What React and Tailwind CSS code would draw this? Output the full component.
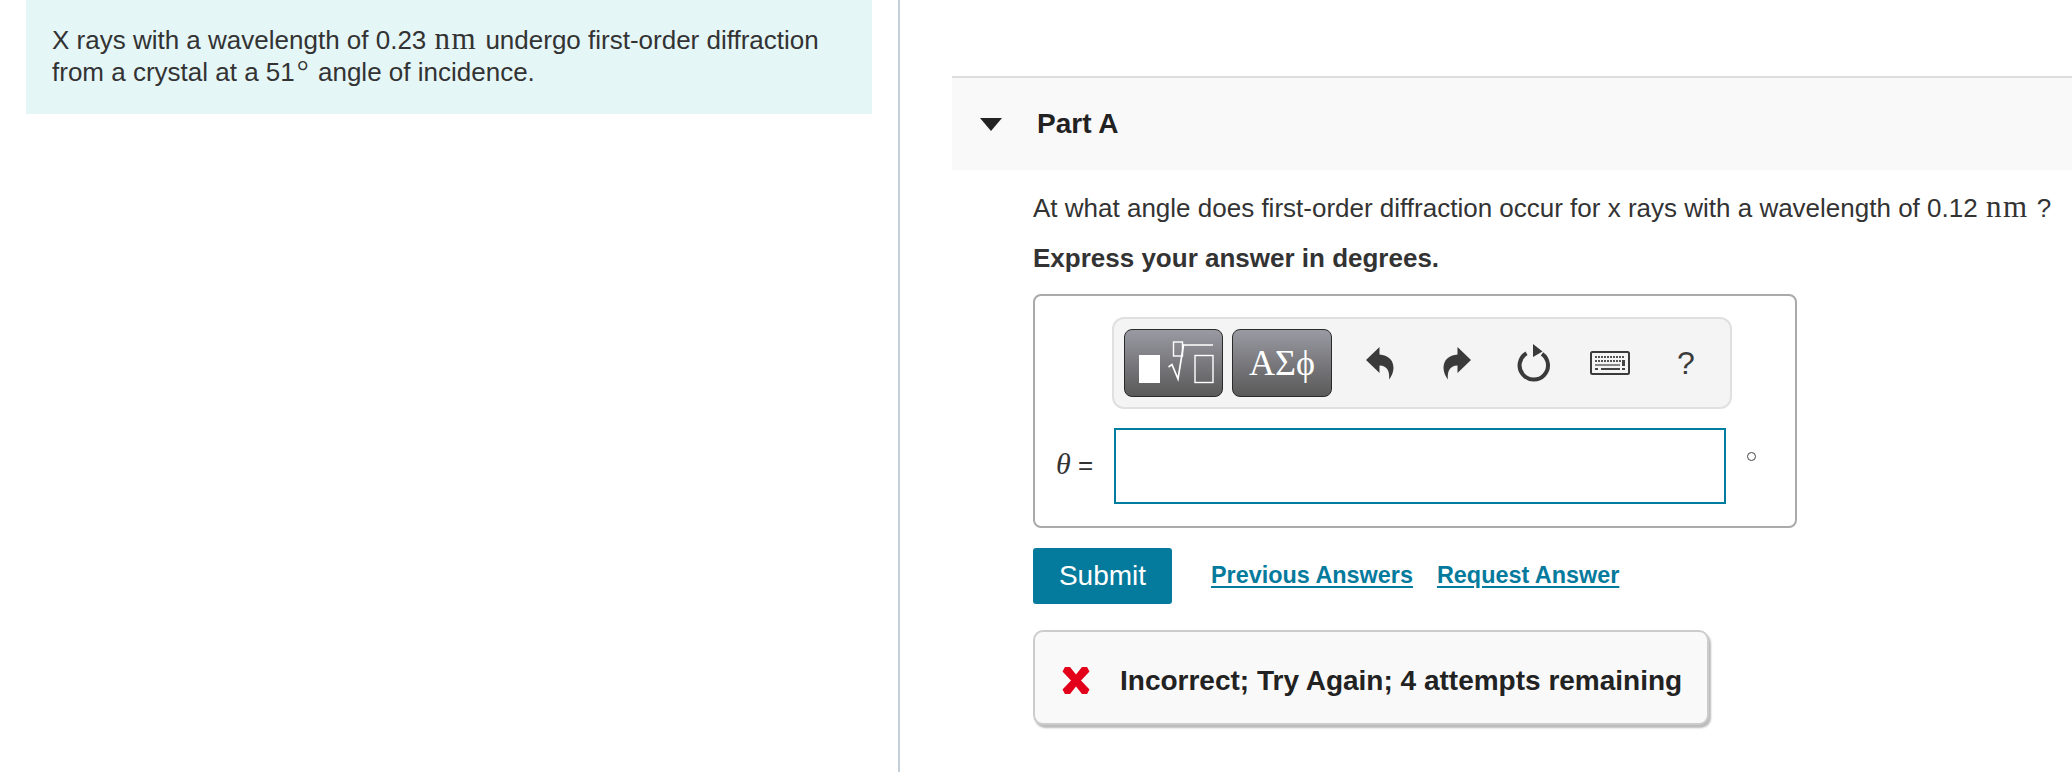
import React from "react";

const sans = "font-['Liberation_Sans',Arial,sans-serif]";
const serif = "font-['Liberation_Serif',serif]";

const Nm = () => <span className={`${serif} mx-[1px] text-[31px] leading-[0] tracking-[1.5px]`}>nm</span>;

const UndoIcon = ({ flip }) => (
  <svg width="28" height="33" viewBox="0 0 28 33" className={flip ? "-scale-x-100" : ""}>
    <path d="M0 13 L13.5 0 V7.5 C22 8 27.5 13 27.5 21 C27.5 25 25.5 29.5 23 32.5 C24 25 21.5 18.5 13.5 18.5 V26 Z" fill="#3a3a3a" />
  </svg>
);

const RefreshIcon = () => (
  <svg width="34" height="38" viewBox="0 0 34 38">
    <path d="M9.5 9.2 A14.2 14.2 0 1 0 25 9.8" fill="none" stroke="#3a3a3a" strokeWidth="4" />
    <path d="M16 0 L25.5 7.5 L16 13 Z" fill="#3a3a3a" />
  </svg>
);

const KeyboardIcon = () => {
  const top = [5, 8, 11, 14, 17, 20, 23, 26, 29, 32];
  const mid = [5, 8, 11, 14, 17, 20, 23, 26, 29];
  return (
    <svg width="40" height="24" viewBox="0 0 40 24">
      <rect x="1" y="1" width="38" height="22" rx="1.5" fill="none" stroke="#3a3a3a" strokeWidth="2" />
      {top.map((x) => <rect key={x} x={x} y="5" width="2" height="2" fill="#555" />)}
      {mid.map((x) => <rect key={x} x={x} y="9" width="2" height="2" fill="#555" />)}
      <rect x="32" y="9" width="3" height="6" fill="#444" />
      <rect x="5" y="13" width="25" height="2" fill="#888" />
      <rect x="5" y="17" width="3" height="2" fill="#444" />
      <rect x="11" y="17" width="19" height="2" fill="#444" />
      <rect x="32" y="17" width="3" height="2" fill="#444" />
    </svg>
  );
};

const MathIcon = () => (
  <svg width="76" height="46" viewBox="0 0 76 46">
    <rect x="0" y="15" width="21" height="28" fill="#fff" />
    <g fill="none" stroke="#fff">
      <rect x="34.5" y="2" width="9" height="14" strokeWidth="1.4" />
      <path d="M29.5 27 L33 24.5 L39 39 L44.5 5 H74" strokeWidth="1.7" />
      <rect x="56" y="15.5" width="18" height="27" strokeWidth="1.4" />
    </g>
  </svg>
);

const PaletteButton = ({ children, width, className }) => (
  <button className={`flex items-center ${width} h-[68px] rounded-[8px] border border-[#2a2a2a] bg-gradient-to-b from-[#9a9aa3] to-[#5a5a5a] ${className}`}>
    {children}
  </button>
);

const App = () => {
  return (
    <div className={`flex h-[772px] w-[2072px] overflow-hidden bg-white text-[#333333] ${sans}`}>
      <div className="w-[900px] shrink-0 border-r-2 border-[#c3cfd9] pl-[26px] pr-[26px]">
        <div className="h-[114px] bg-[#e5f6f7] pl-[26px] pt-[24px] text-[26px] leading-[32px]">
          <p className="h-[32px]">X rays with a wavelength of 0.23 <Nm /> undergo first-order diffraction</p>
          <p className="h-[32px]">from a crystal at a 51<span className={`${serif} ml-[2px] mr-[2px] text-[30px] leading-[0]`}>°</span> angle of incidence.</p>
        </div>
      </div>

      <div className="min-w-0 flex-1 pl-[52px] pt-[76px]">
        <div className="flex h-[94px] items-center border-t-2 border-[#dddddd] bg-[#f9f9f9]">
          <div className="ml-[28px] h-0 w-0 border-x-[11px] border-t-[13px] border-x-transparent border-t-[#222]" />
          <h2 className="ml-[35px] text-[28px] font-bold text-[#222]">Part A</h2>
        </div>

        <div className="pl-[81px]">
          <p className="mt-[22px] h-[32px] whitespace-nowrap text-[26px] leading-[32px]">
            At what angle does first-order diffraction occur for x rays with a wavelength of 0.12 <Nm /> ?
          </p>
          <p className="mt-[18px] text-[26px] font-bold leading-[32px]">Express your answer in degrees.</p>

          <div className="mt-[20px] flex h-[234px] w-[764px] flex-col rounded-[8px] border-2 border-[#aaaaaa] pt-[21px]">
            <div className="ml-[77px] flex h-[92px] w-[620px] items-center rounded-[12px] border-2 border-[#e0e0e0] bg-[#f4f4f4] pl-[10px]">
              <PaletteButton width="w-[99px]" className="justify-start pl-[14px]"><MathIcon /></PaletteButton>
              <div className="w-[9px]" />
              <PaletteButton width="w-[100px]" className="justify-center">
                <span className={`${serif} text-[36px] leading-none text-white`}>ΑΣϕ</span>
              </PaletteButton>
              <div className="ml-[34px]"><UndoIcon /></div>
              <div className="ml-[49px]"><UndoIcon flip /></div>
              <div className="ml-[46px]"><RefreshIcon /></div>
              <div className="ml-[39px]"><KeyboardIcon /></div>
              <span className="ml-[47px] text-[32px] text-[#3a3a3a]">?</span>
            </div>

            <div className="mt-[19px] flex items-center">
              <span className="mb-[6px] ml-[21px] w-[58px] whitespace-nowrap text-[26px]">
                <i className={`${serif} text-[30px]`}>θ</i> =
              </span>
              <input className="h-[76px] w-[612px] border-2 border-[#007c9e] bg-white outline-none" />
              <span className="mb-[20px] ml-[21px] h-[9px] w-[9px] rounded-full border border-[#444]" />
            </div>
          </div>

          <div className="mt-[20px] flex items-center">
            <button className="h-[56px] w-[139px] rounded-[3px] bg-[#047a9c] text-[28px] text-white">Submit</button>
            <a href="#" className="ml-[39px] text-[23.4px] font-bold text-[#047a9c] underline decoration-2 underline-offset-[3px]">Previous Answers</a>
            <a href="#" className="ml-[24px] text-[23.4px] font-bold text-[#047a9c] underline decoration-2 underline-offset-[3px]">Request Answer</a>
          </div>

          <div className="mt-[26px] flex h-[95px] w-[676px] items-center rounded-[10px] border-2 border-[#cccccc] bg-[#f9f9f9] pl-[27px] pt-[6px] shadow-[2px_3px_2px_#bbbbbb]">
            <svg width="28" height="27" viewBox="0 0 28 27">
              <path d="M3 0 H8 L14 7.5 L20 0 H25 L27.5 4.5 L19 13.5 L27.5 22.5 L25 27 H20 L14 19.5 L8 27 H3 L0.5 22.5 L9 13.5 L0.5 4.5 Z" fill="#e2001a" />
            </svg>
            <span className="ml-[30px] whitespace-nowrap text-[28px] font-bold text-[#222]">Incorrect; Try Again; 4 attempts remaining</span>
          </div>
        </div>
      </div>
    </div>
  );
};

export default App;
